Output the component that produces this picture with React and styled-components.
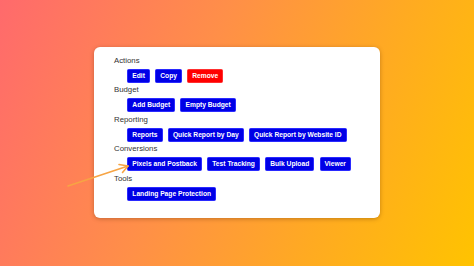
import React from "react";
import styled, { createGlobalStyle } from "styled-components";

const Global = createGlobalStyle`
  html, body { margin: 0; padding: 0; }
  body { font-family: "Liberation Sans", Arial, sans-serif; }
`;

const Page = styled.div`
  position: relative;
  width: 474px;
  height: 266px;
  box-sizing: border-box;
  padding: 47px 0 0 94px;
  background: linear-gradient(112deg, #ff6a6c 0%, #ff8f48 40%, #ffaa22 70%, #ffc300 100%);
  overflow: hidden;
`;

const Card = styled.div`
  width: 286px;
  height: 171px;
  box-sizing: border-box;
  background: #fff;
  border-radius: 6px;
  box-shadow: 0 1px 4px rgba(90, 40, 0, 0.35);
  padding: 7.5px 0 0 20px;
  display: flex;
  flex-direction: column;
`;

const Group = styled.div`
  display: flex;
  flex-direction: column;
  height: 29.5px;
`;

const Label = styled.div`
  font-size: 7.8px;
  line-height: 12px;
  height: 12px;
  color: #333;
`;

const Row = styled.div`
  display: flex;
  gap: 5.3px;
  margin: 2px 0 0 13.3px;
`;

const Button = styled.button`
  height: 14px;
  padding: 0 4px;
  border: 1px solid ${(p) => (p.$danger ? "#ff3030" : "#2a2aff")};
  border-radius: 1.5px;
  background: ${(p) => (p.$danger ? "#ff0000" : "#0000e6")};
  color: #fff;
  font-family: "Liberation Sans", Arial, sans-serif;
  font-weight: bold;
  font-size: 6.7px;
  line-height: 12px;
  white-space: nowrap;
  cursor: pointer;
`;

const Arrow = styled.svg`
  position: absolute;
  left: 0;
  top: 0;
  pointer-events: none;
`;

const groups = [
  { label: "Actions", items: [["Edit"], ["Copy"], ["Remove", true]] },
  { label: "Budget", items: [["Add Budget"], ["Empty Budget"]] },
  { label: "Reporting", items: [["Reports"], ["Quick Report by Day"], ["Quick Report by Website ID"]] },
  { label: "Conversions", items: [["Pixels and Postback"], ["Test Tracking"], ["Bulk Upload"], ["Viewer"]] },
  { label: "Tools", items: [["Landing Page Protection"]] },
];

export default function App() {
  return (
    <Page>
      <Global />
      <Card>
        {groups.map((g) => (
          <Group key={g.label}>
            <Label>{g.label}</Label>
            <Row>
              {g.items.map(([t, d]) => (
                <Button key={t} $danger={d}>{t}</Button>
              ))}
            </Row>
          </Group>
        ))}
      </Card>
      <Arrow width="474" height="266" viewBox="0 0 474 266">
        <g stroke="#f7a444" strokeWidth="1.6" fill="none" strokeLinecap="round" strokeLinejoin="round">
          <path d="M68 186 L128 166" />
          <path d="M119 164.5 L128 166 L122.5 172.5" />
        </g>
      </Arrow>
    </Page>
  );
}
